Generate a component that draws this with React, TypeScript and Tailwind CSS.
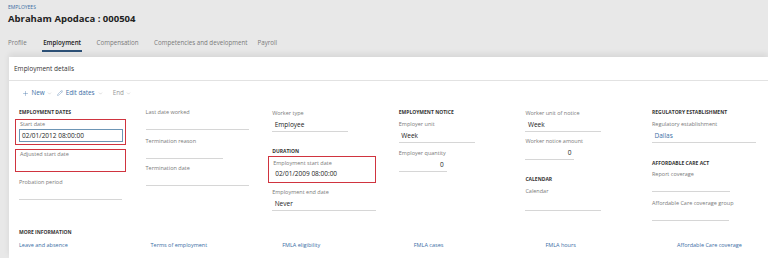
import { ChevronDown, Pencil, Plus } from 'lucide-react';
import type { ReactNode } from 'react';

const Heading = ({ children, className = '' }: { children: ReactNode; className?: string }) => (
  <div className={`h-[10px] leading-[10px] text-[5px] font-bold uppercase text-[#333] whitespace-nowrap ${className}`}>
    {children}
  </div>
);

const Label = ({ children }: { children: ReactNode }) => (
  <div className="h-[9px] leading-[9px] text-[5.5px] text-[#7a7a7a] whitespace-nowrap">{children}</div>
);

// label + value + underline
const Field = ({
  label,
  value,
  width,
  className = '',
  right = false,
  blue = false,
}: {
  label: string;
  value: string;
  width: string;
  className?: string;
  right?: boolean;
  blue?: boolean;
}) => (
  <div className={className}>
    <Label>{label}</Label>
    <div
      className={`h-[14px] leading-[13px] text-[6.5px] border-b border-[#d6d6d6] ${width} ${
        right ? 'text-right pr-[3px]' : 'pl-[2.5px]'
      } ${blue ? 'text-[#3b6ea5]' : 'text-[#222]'}`}
    >
      {value}
    </div>
  </div>
);

// label + empty underline
const Empty = ({ label, width, className = '', tall = false }: { label: string; width: string; className?: string; tall?: boolean }) => (
  <div className={className}>
    <Label>{label}</Label>
    <div className={`${tall ? 'h-[15px]' : 'h-[13px]'} border-b border-[#d6d6d6] ${width}`} />
  </div>
);

const tabs = [
  { name: 'Profile', gap: '' },
  { name: 'Employment', gap: 'ml-[15.5px]' },
  { name: 'Compensation', gap: 'ml-[15.5px]' },
  { name: 'Competencies and development', gap: 'ml-[15.5px]' },
  { name: 'Payroll', gap: 'ml-[10px]' },
];
const links = ['Leave and absence', 'Terms of employment', 'FMLA eligibility', 'FMLA cases', 'FMLA hours', 'Affordable Care coverage'];

export default function App() {
  return (
    <div className="w-[768px] h-[258px] overflow-hidden bg-[#e8e8e8] flex flex-col font-['Open_Sans','Liberation_Sans',sans-serif]">
      {/* page header */}
      <div className="px-[8px] pt-[3px]">
        <div className="h-[8px] leading-[8px] text-[5px] text-[#3b6ea5] uppercase">Employees</div>
        <div className="mt-[1px] h-[14px] leading-[14px] text-[9.5px] font-bold text-[#222]">Abraham Apodaca : 000504</div>
        <div className="mt-[12px] flex">
          {tabs.map((t) => (
            <div
              key={t.name}
              className={`${t.gap} h-[14px] leading-[10px] text-[6.2px] border-b-2 whitespace-nowrap ${
                t.name === 'Employment'
                  ? 'font-semibold text-[#222] border-[#2d5177] px-[1px] -mx-[1px]'
                  : 'text-[#7a7a7a] border-transparent'
              }`}
            >
              {t.name}
            </div>
          ))}
        </div>
      </div>

      {/* panel */}
      <div className="mt-[5px] ml-[9px] flex-1 bg-white shadow-[0_-3px_6px_rgba(0,0,0,0.08)] overflow-hidden">
        <div className="h-[24px] leading-[24px] pl-[5px] text-[6.5px] text-[#333] border-b border-[#e2e2e2]">Employment details</div>

        <div className="flex items-center h-[14px] mt-[5px] ml-[13px] text-[6.3px] text-[#3b6ea5] whitespace-nowrap">
          <Plus size={7} strokeWidth={1.3} />
          <span className="ml-[2.5px]">New</span>
          <ChevronDown size={5} strokeWidth={1.5} className="ml-[2px] text-[#999]" />
          <Pencil size={6} strokeWidth={1.3} className="ml-[5px]" />
          <span className="ml-[3px]">Edit dates</span>
          <ChevronDown size={5} strokeWidth={1.5} className="ml-[3px] text-[#999]" />
          <span className="ml-[10px] text-[#999]">End</span>
          <ChevronDown size={5} strokeWidth={1.5} className="ml-[2px] text-[#999]" />
        </div>

        <div className="mt-[7px] pl-[10px] h-[117px] grid grid-cols-[repeat(6,126.6px)]">
          {/* column 1 */}
          <div>
            <Heading>Employment dates</Heading>
            <div className="-ml-[4px] mt-[2px] w-[111px] h-[26px] border border-[#d0343f] pl-[4px]">
              <div className="h-[8px] leading-[8px] text-[5.5px] text-[#7a7a7a]">Start date</div>
              <div className="mt-[1px] -ml-[1px] w-[104px] h-[13px] border border-[#6d95b5] leading-[11px] pl-[2px] text-[6.5px] text-[#222]">
                02/01/2012 08:00:00
              </div>
            </div>
            <div className="-ml-[4px] mt-[4px] w-[111px] h-[23px] border border-[#d0343f] pl-[4px]">
              <div className="h-[8px] leading-[8px] text-[5.5px] text-[#7a7a7a]">Adjusted start date</div>
            </div>
            <Empty label="Probation period" width="w-[103px]" className="mt-[6px]" />
          </div>

          {/* column 2 */}
          <div>
            <Empty label="Last date worked" width="w-[103px]" className="mt-[1px]" />
            <Empty label="Termination reason" width="w-[77px]" className="mt-[7px]" />
            <Empty label="Termination date" width="w-[103px]" className="mt-[5px]" />
          </div>

          {/* column 3 */}
          <div>
            <Field label="Worker type" value="Employee" width="w-[76px]" className="mt-[1.5px]" />
            <Heading className="mt-[14px]">Duration</Heading>
            <div className="-ml-[4px] w-[108px] h-[27px] border border-[#d0343f] pl-[4px]">
              <div className="mt-[1px] h-[10px] leading-[10px] text-[5.5px] text-[#7a7a7a]">Employment start date</div>
              <div className="h-[12px] leading-[12px] pl-[2px] text-[6.5px] text-[#222]">02/01/2009 08:00:00</div>
            </div>
            <Field label="Employment end date" value="Never" width="w-[104px]" className="mt-[5px]" />
          </div>

          {/* column 4 */}
          <div>
            <Heading>Employment notice</Heading>
            <Field label="Employer unit" value="Week" width="w-[76px]" className="mt-[2.5px]" />
            <Field label="Employer quantity" value="0" width="w-[48px]" right className="mt-[6px]" />
          </div>

          {/* column 5 */}
          <div>
            <Field label="Worker unit of notice" value="Week" width="w-[76px]" className="mt-[1.5px]" />
            <Field label="Worker notice amount" value="0" width="w-[49px]" right className="mt-[5px]" />
            <Heading className="mt-[14.5px]">Calendar</Heading>
            <Empty label="Calendar" width="w-[76px]" tall className="mt-[2.5px]" />
          </div>

          {/* column 6 */}
          <div>
            <Heading>Regulatory establishment</Heading>
            <Field label="Regulatory establishment" value="Dallas" width="w-[104px]" blue className="mt-[2.5px]" />
            <Heading className="mt-[15px]">Affordable care act</Heading>
            <Empty label="Report coverage" width="w-[78px]" className="mt-[2.5px]" />
            <Empty label="Affordable Care coverage group" width="w-[77px]" className="mt-[6.5px]" />
          </div>
        </div>

        <div className="pl-[10px]">
          <Heading className="mt-[3px]">More information</Heading>
          <div className="mt-[3px] grid grid-cols-[repeat(6,131.6px)]">
            {links.map((l) => (
              <div key={l} className="h-[10px] leading-[10px] text-[5.5px] text-[#3b6ea5] whitespace-nowrap">
                {l}
              </div>
            ))}
          </div>
        </div>
      </div>
    </div>
  );
}
